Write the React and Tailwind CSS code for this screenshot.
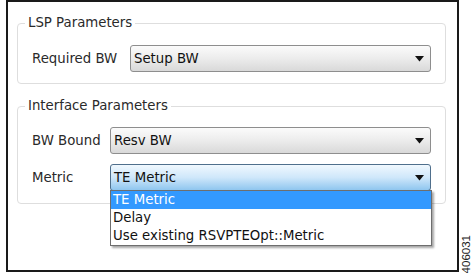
import React from "react";

const Arrow = () => (
  <svg width="9" height="6" viewBox="0 0 9 6" className="shrink-0">
    <polygon points="0,0 9,0 4.5,5.5" fill="#111" />
  </svg>
);

function Select({ value, active }) {
  return (
    <div
      className={
        "flex-1 h-[27px] flex items-center justify-between pl-[3px] pr-[6px] rounded-[3px] border " +
        (active
          ? "border-[#4f6f8c] bg-[linear-gradient(to_bottom,#f0f8fe,#cfe7fa_50%,#8fc6ef)]"
          : "border-[#8e8e8e] bg-[linear-gradient(to_bottom,#fbfbfb,#ececec_50%,#d9d9d9)]")
      }
    >
      <span className="text-[#111]">{value}</span>
      <Arrow />
    </div>
  );
}

export default function App() {
  return (
    <div
      className="w-[474px] h-[273px] bg-white flex text-[13.3px] leading-[16px] text-[#2a2a2a]"
      style={{ fontFamily: '"DejaVu Sans", Verdana, sans-serif' }}
    >
      <div className="ml-[6px] w-[453px] h-[272px] border-2 border-[#1a1a1a] pl-[9px] pr-[11px] pt-[13px]">
        <fieldset className="border border-[#dedede] rounded-[4px] px-0 pt-[14px] pb-[11px]">
          <legend className="ml-[7px] px-[3px]">LSP Parameters</legend>
          <div className="flex items-center px-[14px]">
            <span className="w-[98px] shrink-0">Required BW</span>
            <Select value="Setup BW" />
          </div>
        </fieldset>
        <fieldset className="mt-[14px] border border-[#dedede] rounded-[4px] px-0 pt-[13px] pb-[12px]">
          <legend className="ml-[7px] px-[3px]">Interface Parameters</legend>
          <div className="flex items-center px-[14px]">
            <span className="w-[78px] shrink-0">BW Bound</span>
            <Select value="Resv BW" />
          </div>
          <div className="flex items-center mt-[10px] px-[14px]">
            <span className="w-[78px] shrink-0">Metric</span>
            <div className="flex-1 relative flex">
              <Select value="TE Metric" active />
              <div className="absolute left-0 top-[26px] w-[322px] bg-white border border-[#6e6e6e] shadow-[2px_2px_2px_rgba(0,0,0,0.35)] z-10 flex flex-col">
                <div className="h-[18px] pl-[2px] flex items-center bg-[#3399ff] text-white">TE Metric</div>
                <div className="h-[18px] pl-[2px] flex items-center text-[#111]">Delay</div>
                <div className="h-[18px] pl-[2px] flex items-center text-[#111]">Use existing RSVPTEOpt::Metric</div>
              </div>
            </div>
          </div>
        </fieldset>
      </div>
      <div className="flex-1 flex flex-col justify-end items-center">
        <span
          className="[writing-mode:vertical-rl] rotate-180 text-[11.5px] leading-[11px] text-[#222]"
          style={{ fontFamily: '"Liberation Sans", Arial, sans-serif' }}
        >
          406031
        </span>
      </div>
    </div>
  );
}
